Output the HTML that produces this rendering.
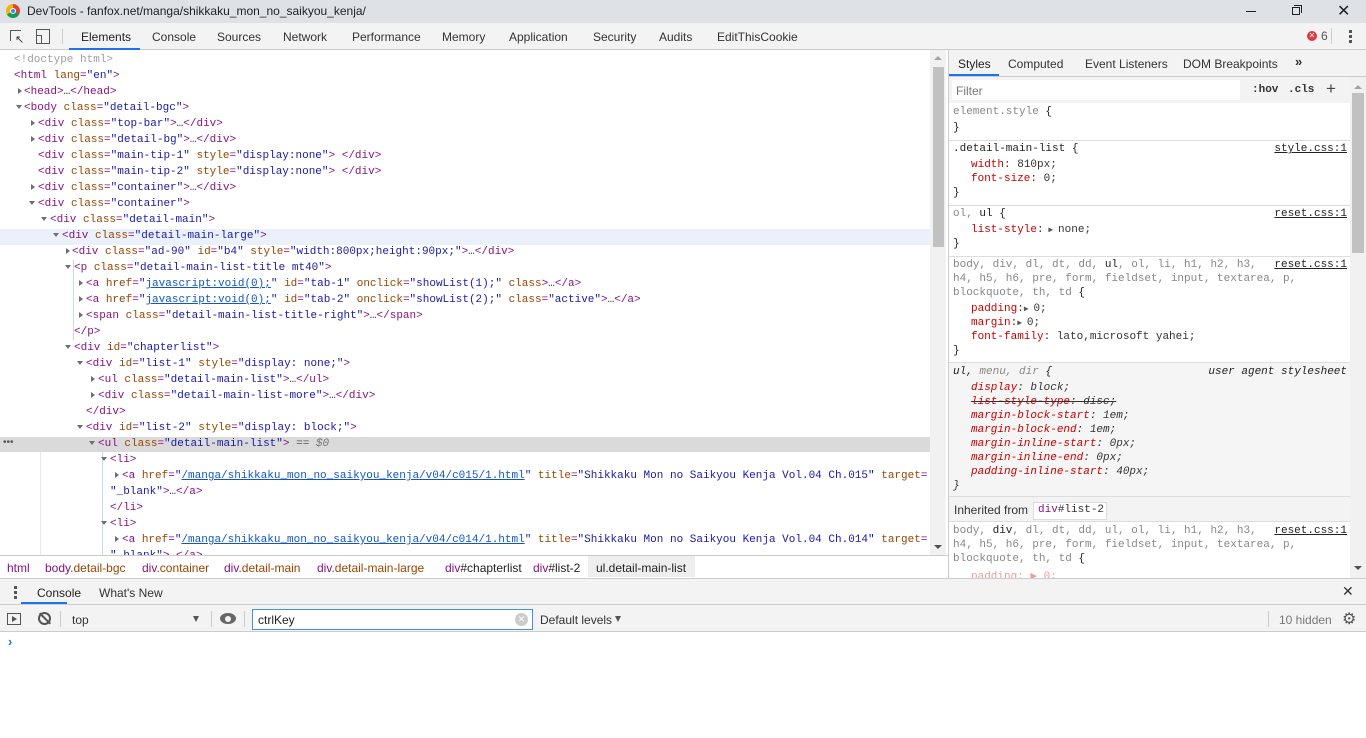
<!DOCTYPE html>
<html><head><style>
*{margin:0;padding:0;box-sizing:border-box}
body{width:1366px;height:738px;overflow:hidden;background:#fff;font-family:"Liberation Sans",sans-serif;font-size:12px;color:#333;position:relative}
.a{position:absolute;white-space:pre}
.m{font-family:"Liberation Mono",monospace;font-size:11px}
.t{color:#881280}.n{color:#994500}.v{color:#1a1aa6}.g{color:#a0a0a0}.k{color:#222}
.l{color:#1a1aa6;text-decoration:underline;color:#1155cc}
.tri{position:absolute;width:0;height:0}
.r{border-left:4px solid #6e6e6e;border-top:3.5px solid transparent;border-bottom:3.5px solid transparent}
.d{border-top:4px solid #6e6e6e;border-left:3.5px solid transparent;border-right:3.5px solid transparent}
.p{color:#c80000}.s{color:#222}
.hr{position:absolute;left:949px;width:401px;height:1px;background:#ddd}
.src{position:absolute;right:19px;text-decoration:underline;color:#222}
</style></head><body>
<!-- title bar -->
<div class="a" style="left:0;top:0;width:1366px;height:23px;background:#dee1e6"></div>
<div class="a" style="left:6px;top:4px;width:14px;height:14px;border-radius:50%;background:conic-gradient(#db4437 0 120deg,#0f9d58 120deg 240deg,#f4b400 240deg 360deg)"></div>
<div class="a" style="left:10px;top:8px;width:6px;height:6px;border-radius:50%;background:#4285f4;border:1px solid #fff"></div>
<div class="a" style="left:27px;top:4px;font-size:12px;color:#222">DevTools - fanfox.net/manga/shikkaku_mon_no_saikyou_kenja/</div>
<div class="a" style="left:1246px;top:11px;width:10px;height:1px;background:#222"></div>
<div class="a" style="left:1292px;top:7px;width:8px;height:8px;border:1px solid #222"></div>
<div class="a" style="left:1294px;top:5px;width:8px;height:8px;border-top:1px solid #222;border-right:1px solid #222"></div>
<div class="a" style="left:1337px;top:1px;font-size:16px;color:#222">✕</div>
<!-- toolbar -->
<div class="a" style="left:0;top:23px;width:1366px;height:27px;background:#f3f3f3;border-bottom:1px solid #ccc"></div>
<div class="a" style="left:10px;top:30px;width:11px;height:11px;border:1px solid #555;border-right:none;border-bottom:none"></div>
<div class="a" style="left:15px;top:33px;font-size:11px;color:#333">↖</div>
<div class="a" style="left:36px;top:29px;width:14px;height:15px;border:1.5px solid #555"></div>
<div class="a" style="left:36px;top:35px;width:6px;height:9px;border:1.5px solid #555;background:#f3f3f3"></div>
<div class="a" style="left:62px;top:29px;width:1px;height:15px;background:#ccc"></div>
<div class="a" style="left:69px;top:48px;width:71px;height:2px;background:#1a73e8"></div>
<div class="a" style="left:81px;top:30px;color:#222">Elements</div>
<div class="a" style="left:152px;top:30px;color:#333">Console</div>
<div class="a" style="left:217px;top:30px;color:#333">Sources</div>
<div class="a" style="left:283px;top:30px;color:#333">Network</div>
<div class="a" style="left:352px;top:30px;color:#333">Performance</div>
<div class="a" style="left:442px;top:30px;color:#333">Memory</div>
<div class="a" style="left:509px;top:30px;color:#333">Application</div>
<div class="a" style="left:593px;top:30px;color:#333">Security</div>
<div class="a" style="left:659px;top:30px;color:#333">Audits</div>
<div class="a" style="left:717px;top:30px;color:#333">EditThisCookie</div>
<div class="a" style="left:1307px;top:31px;width:10px;height:10px;border-radius:50%;background:#e0393e;color:#fff;font-size:8px;line-height:10px;text-align:center">✕</div>
<div class="a" style="left:1321px;top:29px;color:#555">6</div>
<div class="a" style="left:1331px;top:28px;width:1px;height:16px;background:#ccc"></div>
<div class="a" style="left:1349px;top:30px;width:3px;height:3px;background:#555;box-shadow:0 5px #555,0 10px #555"></div>

<!-- elements tree -->
<div class="a" style="left:0;top:0;width:930px;height:555px;overflow:hidden">
<div class="a" style="left:0;top:229px;width:930px;height:16px;background:#eaf1fb"></div>
<div class="a" style="left:0;top:437px;width:930px;height:15px;background:#dadada"></div>
<div class="a g" style="left:3px;top:437px;font-size:10px;color:#555">•••</div>
<div class="a" style="left:73px;top:260px;width:1px;height:80px;background:#c8d6f0"></div>
<div class="a" style="left:40px;top:452px;width:1px;height:103px;background:#e8e8e8"></div>
<div class="a" style="left:102px;top:452px;width:1px;height:103px;background:#c8d6f0"></div>
<div class="m a" style="left:0;top:1px;width:930px;height:554px">
<div class="a g" style="left:14px;top:53px">&lt;!doctype html&gt;</div>
<div class="a" style="left:14px;top:69px"><span class="t">&lt;html</span> <span class="n">lang</span><span class="t">=</span><span class="v">"en"</span><span class="t">&gt;</span></div>
<div class="tri r" style="left:18px;top:87px"></div><div class="a t" style="left:24px;top:85px">&lt;head&gt;<span class="k">…</span>&lt;/head&gt;</div>
<div class="tri d" style="left:16px;top:104px"></div><div class="a" style="left:24px;top:101px"><span class="t">&lt;body</span> <span class="n">class</span><span class="t">=</span><span class="v">"detail-bgc"</span><span class="t">&gt;</span></div>
<div class="tri r" style="left:31px;top:119px"></div><div class="a" style="left:38px;top:117px"><span class="t">&lt;div</span> <span class="n">class</span><span class="t">=</span><span class="v">"top-bar"</span><span class="t">&gt;</span>…<span class="t">&lt;/div&gt;</span></div>
<div class="tri r" style="left:31px;top:135px"></div><div class="a" style="left:38px;top:133px"><span class="t">&lt;div</span> <span class="n">class</span><span class="t">=</span><span class="v">"detail-bg"</span><span class="t">&gt;</span>…<span class="t">&lt;/div&gt;</span></div>
<div class="a" style="left:38px;top:149px"><span class="t">&lt;div</span> <span class="n">class</span><span class="t">=</span><span class="v">"main-tip-1"</span> <span class="n">style</span><span class="t">=</span><span class="v">"display:none"</span><span class="t">&gt;</span> <span class="t">&lt;/div&gt;</span></div>
<div class="a" style="left:38px;top:165px"><span class="t">&lt;div</span> <span class="n">class</span><span class="t">=</span><span class="v">"main-tip-2"</span> <span class="n">style</span><span class="t">=</span><span class="v">"display:none"</span><span class="t">&gt;</span> <span class="t">&lt;/div&gt;</span></div>
<div class="tri r" style="left:31px;top:183px"></div><div class="a" style="left:38px;top:181px"><span class="t">&lt;div</span> <span class="n">class</span><span class="t">=</span><span class="v">"container"</span><span class="t">&gt;</span>…<span class="t">&lt;/div&gt;</span></div>
<div class="tri d" style="left:29px;top:200px"></div><div class="a" style="left:38px;top:197px"><span class="t">&lt;div</span> <span class="n">class</span><span class="t">=</span><span class="v">"container"</span><span class="t">&gt;</span></div>
<div class="tri d" style="left:41px;top:216px"></div><div class="a" style="left:50px;top:213px"><span class="t">&lt;div</span> <span class="n">class</span><span class="t">=</span><span class="v">"detail-main"</span><span class="t">&gt;</span></div>
<div class="tri d" style="left:53px;top:232px"></div><div class="a" style="left:62px;top:229px"><span class="t">&lt;div</span> <span class="n">class</span><span class="t">=</span><span class="v">"detail-main-large"</span><span class="t">&gt;</span></div>
<div class="tri r" style="left:66px;top:247px"></div><div class="a" style="left:72px;top:245px"><span class="t">&lt;div</span> <span class="n">class</span><span class="t">=</span><span class="v">"ad-90"</span> <span class="n">id</span><span class="t">=</span><span class="v">"b4"</span> <span class="n">style</span><span class="t">=</span><span class="v">"width:800px;height:90px;"</span><span class="t">&gt;</span>…<span class="t">&lt;/div&gt;</span></div>
<div class="tri d" style="left:65px;top:264px"></div><div class="a" style="left:74px;top:261px"><span class="t">&lt;p</span> <span class="n">class</span><span class="t">=</span><span class="v">"detail-main-list-title mt40"</span><span class="t">&gt;</span></div>
<div class="tri r" style="left:79px;top:279px"></div><div class="a" style="left:86px;top:277px"><span class="t">&lt;a</span> <span class="n">href</span><span class="t">=</span><span class="v">"<span class="l">javascript:void(0);</span>"</span> <span class="n">id</span><span class="t">=</span><span class="v">"tab-1"</span> <span class="n">onclick</span><span class="t">=</span><span class="v">"showList(1);"</span> <span class="n">class</span><span class="t">&gt;</span>…<span class="t">&lt;/a&gt;</span></div>
<div class="tri r" style="left:79px;top:295px"></div><div class="a" style="left:86px;top:293px"><span class="t">&lt;a</span> <span class="n">href</span><span class="t">=</span><span class="v">"<span class="l">javascript:void(0);</span>"</span> <span class="n">id</span><span class="t">=</span><span class="v">"tab-2"</span> <span class="n">onclick</span><span class="t">=</span><span class="v">"showList(2);"</span> <span class="n">class</span><span class="t">=</span><span class="v">"active"</span><span class="t">&gt;</span>…<span class="t">&lt;/a&gt;</span></div>
<div class="tri r" style="left:79px;top:311px"></div><div class="a" style="left:86px;top:309px"><span class="t">&lt;span</span> <span class="n">class</span><span class="t">=</span><span class="v">"detail-main-list-title-right"</span><span class="t">&gt;</span>…<span class="t">&lt;/span&gt;</span></div>
<div class="a t" style="left:74px;top:325px">&lt;/p&gt;</div>
<div class="tri d" style="left:65px;top:344px"></div><div class="a" style="left:74px;top:341px"><span class="t">&lt;div</span> <span class="n">id</span><span class="t">=</span><span class="v">"chapterlist"</span><span class="t">&gt;</span></div>
<div class="tri d" style="left:77px;top:360px"></div><div class="a" style="left:86px;top:357px"><span class="t">&lt;div</span> <span class="n">id</span><span class="t">=</span><span class="v">"list-1"</span> <span class="n">style</span><span class="t">=</span><span class="v">"display: none;"</span><span class="t">&gt;</span></div>
<div class="tri r" style="left:91px;top:375px"></div><div class="a" style="left:98px;top:373px"><span class="t">&lt;ul</span> <span class="n">class</span><span class="t">=</span><span class="v">"detail-main-list"</span><span class="t">&gt;</span>…<span class="t">&lt;/ul&gt;</span></div>
<div class="tri r" style="left:91px;top:391px"></div><div class="a" style="left:98px;top:389px"><span class="t">&lt;div</span> <span class="n">class</span><span class="t">=</span><span class="v">"detail-main-list-more"</span><span class="t">&gt;</span>…<span class="t">&lt;/div&gt;</span></div>
<div class="a t" style="left:86px;top:405px">&lt;/div&gt;</div>
<div class="tri d" style="left:77px;top:424px"></div><div class="a" style="left:86px;top:421px"><span class="t">&lt;div</span> <span class="n">id</span><span class="t">=</span><span class="v">"list-2"</span> <span class="n">style</span><span class="t">=</span><span class="v">"display: block;"</span><span class="t">&gt;</span></div>
<div class="tri d" style="left:89px;top:440px"></div><div class="a" style="left:98px;top:437px"><span class="t">&lt;ul</span> <span class="n">class</span><span class="t">=</span><span class="v">"detail-main-list"</span><span class="t">&gt;</span> <span style="color:#555">==</span> <i style="color:#777">$0</i></div>
<div class="tri d" style="left:101px;top:456px"></div><div class="a t" style="left:110px;top:453px">&lt;li&gt;</div>
<div class="tri r" style="left:115px;top:471px"></div><div class="a" style="left:122px;top:469px"><span class="t">&lt;a</span> <span class="n">href</span><span class="t">=</span><span class="v">"<span class="l">/manga/shikkaku_mon_no_saikyou_kenja/v04/c015/1.html</span>"</span> <span class="n">title</span><span class="t">=</span><span class="v">"Shikkaku Mon no Saikyou Kenja Vol.04 Ch.015"</span> <span class="n">target</span><span class="t">=</span></div>
<div class="a" style="left:110px;top:485px"><span class="v">"_blank"</span><span class="t">&gt;</span>…<span class="t">&lt;/a&gt;</span></div>
<div class="a t" style="left:110px;top:501px">&lt;/li&gt;</div>
<div class="tri d" style="left:101px;top:520px"></div><div class="a t" style="left:110px;top:517px">&lt;li&gt;</div>
<div class="tri r" style="left:115px;top:535px"></div><div class="a" style="left:122px;top:533px"><span class="t">&lt;a</span> <span class="n">href</span><span class="t">=</span><span class="v">"<span class="l">/manga/shikkaku_mon_no_saikyou_kenja/v04/c014/1.html</span>"</span> <span class="n">title</span><span class="t">=</span><span class="v">"Shikkaku Mon no Saikyou Kenja Vol.04 Ch.014"</span> <span class="n">target</span><span class="t">=</span></div>
<div class="a" style="left:110px;top:549px"><span class="v">"_blank"</span><span class="t">&gt;</span>…<span class="t">&lt;/a&gt;</span></div>
</div>
</div>
<!-- left scrollbar -->
<div class="a" style="left:930px;top:50px;width:16px;height:505px;background:#f1f1f1"></div>
<div class="a" style="left:933px;top:67px;width:11px;height:180px;background:#c1c1c1"></div>
<div class="a" style="left:934px;top:56px;border-bottom:4px solid #a3a3a3;border-left:4px solid transparent;border-right:4px solid transparent"></div>
<div class="a" style="left:934px;top:545px;border-top:4px solid #505050;border-left:4px solid transparent;border-right:4px solid transparent"></div>
<!-- breadcrumbs -->
<div class="a" style="left:0;top:555px;width:948px;height:23px;background:#fff;border-top:1px solid #ccc"></div>
<div class="a" style="left:588px;top:556px;width:107px;height:21px;background:#eee"></div>
<div class="a" style="left:7px;top:561px"><span class="t">html</span></div>
<div class="a" style="left:45px;top:561px"><span class="t">body</span><span class="n">.detail-bgc</span></div>
<div class="a" style="left:142px;top:561px"><span class="t">div</span><span class="n">.container</span></div>
<div class="a" style="left:224px;top:561px"><span class="t">div</span><span class="n">.detail-main</span></div>
<div class="a" style="left:317px;top:561px"><span class="t">div</span><span class="n">.detail-main-large</span></div>
<div class="a" style="left:445px;top:561px"><span class="t">div</span><span class="k">#chapterlist</span></div>
<div class="a" style="left:533px;top:561px"><span class="t">div</span><span class="k">#list-2</span></div>
<div class="a k" style="left:596px;top:561px">ul.detail-main-list</div>
<!-- divider -->
<div class="a" style="left:948px;top:50px;width:1px;height:528px;background:#ccc"></div>
<!-- styles pane -->
<div class="a" style="left:949px;top:50px;width:417px;height:27px;background:#f3f3f3;border-bottom:1px solid #ccc"></div>
<div class="a" style="left:949px;top:74px;width:50px;height:2px;background:#1a73e8"></div>
<div class="a k" style="left:958px;top:57px">Styles</div>
<div class="a" style="left:1008px;top:57px">Computed</div>
<div class="a" style="left:1085px;top:57px">Event Listeners</div>
<div class="a" style="left:1183px;top:57px">DOM Breakpoints</div>
<div class="a" style="left:1295px;top:54px;font-size:13px;font-weight:bold">»</div>
<div class="a" style="left:949px;top:77px;width:401px;height:26px;background:#f3f3f3"></div>
<div class="a" style="left:952px;top:80px;width:288px;height:20px;background:#fff"></div>
<div class="a" style="left:956px;top:84px;color:#777">Filter</div>
<div class="a m" style="left:1252px;top:84px;font-weight:bold;color:#333">:hov</div>
<div class="a m" style="left:1288px;top:84px;font-weight:bold;color:#333">.cls</div>
<div class="a" style="left:1326px;top:79px;font-size:17px;color:#444">+</div>
<div class="a" style="left:1350px;top:77px;width:16px;height:501px;background:#f1f1f1"></div>
<div class="a" style="left:1352px;top:93px;width:12px;height:160px;background:#c1c1c1"></div>
<div class="a" style="left:1354px;top:85px;border-bottom:4px solid #a3a3a3;border-left:4px solid transparent;border-right:4px solid transparent"></div>
<div class="a" style="left:1354px;top:566px;border-top:4px solid #505050;border-left:4px solid transparent;border-right:4px solid transparent"></div>
<div class="m" style="position:absolute;left:0;top:0;width:1350px;height:578px;overflow:hidden">
<div class="a g" style="left:953px;top:106px;color:#888">element.style <span class="k">{</span></div>
<div class="a k" style="left:953px;top:122px">}</div>
<div class="hr" style="top:140px"></div>
<div class="a k" style="left:953px;top:143px">.detail-main-list {</div><div class="src" style="right:3px;top:143px">style.css:1</div>
<div class="a" style="left:971px;top:159px"><span class="p">width</span>: 810px;</div>
<div class="a" style="left:971px;top:173px"><span class="p">font-size</span>: 0;</div>
<div class="a k" style="left:953px;top:187px">}</div>
<div class="hr" style="top:205px"></div>
<div class="a" style="left:953px;top:208px;color:#888">ol, <span class="k">ul</span> <span class="k">{</span></div><div class="src" style="right:3px;top:208px">reset.css:1</div>
<div class="a" style="left:971px;top:224px"><span class="p">list-style</span>:<span style="font-size:8px;color:#555"> ▶ </span>none;</div>
<div class="a k" style="left:953px;top:238px">}</div>
<div class="hr" style="top:256px"></div>
<div class="a" style="left:953px;top:259px;color:#888">body, div, dl, dt, dd, <span class="k">ul</span>, ol, li, h1, h2, h3,</div><div class="src" style="right:3px;top:259px">reset.css:1</div>
<div class="a" style="left:953px;top:273px;color:#888">h4, h5, h6, pre, form, fieldset, input, textarea, p,</div>
<div class="a" style="left:953px;top:287px;color:#888">blockquote, th, td <span class="k">{</span></div>
<div class="a" style="left:971px;top:303px"><span class="p">padding</span>:<span style="font-size:8px;color:#555">▶ </span>0;</div>
<div class="a" style="left:971px;top:317px"><span class="p">margin</span>:<span style="font-size:8px;color:#555">▶ </span>0;</div>
<div class="a" style="left:971px;top:331px"><span class="p">font-family</span>: lato,microsoft yahei;</div>
<div class="a k" style="left:953px;top:345px">}</div>
<div class="a" style="left:949px;top:362px;width:401px;height:135px;background:#f5f5f5;border-top:1px solid #ddd;border-bottom:1px solid #ddd"></div>
<div class="a" style="left:953px;top:366px;font-style:italic;color:#222">ul, <span style="color:#888">menu, dir</span> {</div><div class="a" style="right:3px;top:366px;font-style:italic;color:#222">user agent stylesheet</div>
<div class="a" style="left:971px;top:382px;font-style:italic"><span class="p">display</span>: block;</div>
<div class="a" style="left:971px;top:396px;font-style:italic;text-decoration:line-through"><span class="p">list-style-type</span>: disc;</div>
<div class="a" style="left:971px;top:410px;font-style:italic"><span class="p">margin-block-start</span>: 1em;</div>
<div class="a" style="left:971px;top:424px;font-style:italic"><span class="p">margin-block-end</span>: 1em;</div>
<div class="a" style="left:971px;top:438px;font-style:italic"><span class="p">margin-inline-start</span>: 0px;</div>
<div class="a" style="left:971px;top:452px;font-style:italic"><span class="p">margin-inline-end</span>: 0px;</div>
<div class="a" style="left:971px;top:466px;font-style:italic"><span class="p">padding-inline-start</span>: 40px;</div>
<div class="a" style="left:953px;top:480px;font-style:italic">}</div>
<div class="a" style="left:949px;top:497px;width:401px;height:25px;background:#f3f3f3;border-bottom:1px solid #ddd"></div>
<div class="a" style="left:954px;top:503px;font-family:'Liberation Sans',sans-serif;font-size:12px;color:#333">Inherited from</div>
<div class="a" style="left:1033px;top:502px;width:74px;height:18px;background:#fff;border:1px solid #ddd"></div>
<div class="a" style="left:1038px;top:504px"><span class="t">div</span>#list-2</div>
<div class="a" style="left:953px;top:525px;color:#888">body, <span class="k">div</span>, dl, dt, dd, ul, ol, li, h1, h2, h3,</div><div class="src" style="right:3px;top:525px">reset.css:1</div>
<div class="a" style="left:953px;top:539px;color:#888">h4, h5, h6, pre, form, fieldset, input, textarea, p,</div>
<div class="a" style="left:953px;top:553px;color:#888">blockquote, th, td <span class="k">{</span></div>
<div class="a" style="left:971px;top:569px;color:#e8a0a0">padding: ▶ 0;</div>
</div>
<!-- console drawer -->
<div class="a" style="left:0;top:578px;width:1366px;height:27px;background:#f3f3f3;border-top:1px solid #ccc;border-bottom:1px solid #ccc"></div>
<div class="a" style="left:14px;top:586px;width:3px;height:3px;background:#555;box-shadow:0 5px #555,0 10px #555"></div>
<div class="a" style="left:21px;top:602px;width:46px;height:2px;background:#1a73e8"></div>
<div class="a k" style="left:37px;top:586px">Console</div>
<div class="a" style="left:99px;top:586px">What's New</div>
<div class="a" style="left:1342px;top:583px;font-size:14px;color:#333">✕</div>
<div class="a" style="left:0;top:605px;width:1366px;height:27px;background:#f3f3f3;border-bottom:1px solid #ccc"></div>
<div class="a" style="left:7px;top:613px;width:14px;height:12px;border:1px solid #555"></div>
<div class="a" style="left:12px;top:616px;border-left:5px solid #555;border-top:3px solid transparent;border-bottom:3px solid transparent"></div>
<div class="a" style="left:38px;top:612px;width:13px;height:13px;border:2px solid #555;border-radius:50%"></div>
<div class="a" style="left:44px;top:611px;width:2px;height:15px;background:#555;transform:rotate(-45deg)"></div>
<div class="a" style="left:60px;top:611px;width:1px;height:16px;background:#ccc"></div>
<div class="a" style="left:72px;top:613px">top</div>
<div class="a" style="left:193px;top:616px;border-top:6px solid #555;border-left:3.5px solid transparent;border-right:3.5px solid transparent"></div>
<div class="a" style="left:211px;top:611px;width:1px;height:16px;background:#ccc"></div>
<div class="a" style="left:220px;top:613px;width:16px;height:11px;border-radius:50%;background:#666"></div>
<div class="a" style="left:225px;top:616px;width:6px;height:6px;border-radius:50%;background:#f3f3f3"></div>
<div class="a" style="left:244px;top:611px;width:1px;height:16px;background:#ccc"></div>
<div class="a" style="left:252px;top:609px;width:281px;height:21px;background:#fff;border:1px solid #4a90d9"></div>
<div class="a k" style="left:258px;top:613px">ctrlKey</div>
<div class="a" style="left:515px;top:613px;width:13px;height:13px;border-radius:50%;background:#ccc;color:#fff;font-size:9px;line-height:13px;text-align:center">✕</div>
<div class="a" style="left:540px;top:613px">Default levels</div>
<div class="a" style="left:615px;top:616px;border-top:6px solid #555;border-left:3.5px solid transparent;border-right:3.5px solid transparent"></div>
<div class="a" style="left:1268px;top:611px;width:1px;height:16px;background:#ccc"></div>
<div class="a" style="left:1279px;top:613px;color:#777">10 hidden</div>
<div class="a" style="left:1342px;top:609px;font-size:16px;color:#555">⚙</div>
<div class="a" style="left:8px;top:634px;color:#1a73e8;font-size:13px;font-weight:bold">›</div>
</body></html>
